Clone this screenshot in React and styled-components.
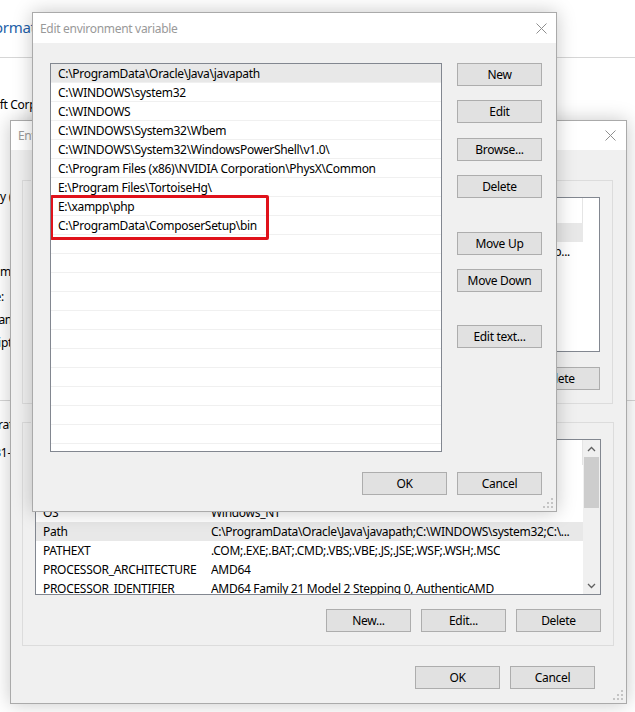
import React from "react"
import styled, { createGlobalStyle } from "styled-components"

const GlobalStyle = createGlobalStyle`
  html, body {
    margin: 0;
    padding: 0;
  }
  body {
    font-family: "Noto Sans", "Segoe UI", sans-serif;
    font-size: 12px;
    letter-spacing: -0.3px;
    color: #000;
  }
`

const Desktop = styled.div`
  position: relative;
  width: 635px;
  height: 712px;
  overflow: hidden;
  background: #fff;
`

/* the System page behind both dialogs */
const Backdrop = styled.div`
  display: flex;
  flex-direction: column;
  height: 100%;
`

const BgText = styled.div`
  display: flex;
  justify-content: flex-end;
  width: ${(p) => p.$end}px;
  margin-top: ${(p) => p.$gap}px;
  white-space: nowrap;
  font-size: ${(p) => (p.$big ? 15 : 12)}px;
  line-height: ${(p) => (p.$big ? 20 : 16)}px;
  color: ${(p) => (p.$big ? "#1e5fa8" : "#000")};
`

const BgRule = styled.div`
  height: 1px;
  margin-top: ${(p) => p.$gap}px;
  background: #d6d6d6;
`

/* dialog frames */
const Window = styled.div`
  position: absolute;
  left: ${(p) => p.$x}px;
  top: ${(p) => p.$y}px;
  width: ${(p) => p.$w}px;
  height: ${(p) => p.$h}px;
  box-sizing: border-box;
  display: flex;
  flex-direction: column;
  background: #f0f0f0;
  border: 1px solid #aaaaaa;
  box-shadow: 0 0 18px rgba(0, 0, 0, 0.22);
`

const TitleBar = styled.div`
  height: ${(p) => p.$h}px;
  flex: none;
  display: flex;
  align-items: center;
  justify-content: space-between;
  padding: 0 ${(p) => p.$pr}px 0 7px;
  background: #fff;
  color: #999;
  font-size: 12px;
`

const CloseIcon = () => (
  <svg width="11" height="11" viewBox="0 0 11 11">
    <path d="M0.5 0.5 L10.5 10.5 M10.5 0.5 L0.5 10.5" stroke="#8f8f8f" strokeWidth="1" fill="none" />
  </svg>
)

const Grip = styled.div`
  position: absolute;
  right: 2px;
  bottom: 2px;
  width: 12px;
  height: 12px;
  line-height: 0;
`

const GripIcon = () => (
  <svg width="12" height="12" viewBox="0 0 12 12">
    {[
      [9, 1],
      [9, 5],
      [5, 5],
      [9, 9],
      [5, 9],
      [1, 9],
    ].map(([x, y]) => (
      <rect key={x + "-" + y} x={x} y={y} width="2" height="2" fill="#c4c4c4" />
    ))}
  </svg>
)

const Button = styled.button`
  width: 85px;
  height: 23px;
  flex: none;
  box-sizing: border-box;
  margin: ${(p) => p.$gap || 0}px 0 0 0;
  padding: 0;
  background: #e1e1e1;
  border: 1px solid #adadad;
  font: inherit;
  font-size: 12px;
  letter-spacing: -0.3px;
  color: #000;
`

/* Edit environment variable */
const EditBody = styled.div`
  flex: 1;
  display: flex;
  flex-direction: column;
  padding: 20px 14px 16px 17px;
`

const EditMain = styled.div`
  display: flex;
  gap: 15px;
  height: 389px;
`

const PathList = styled.div`
  position: relative;
  width: 392px;
  box-sizing: border-box;
  border: 1px solid #828790;
  background: #fff;
  overflow: hidden;
`

const PathRow = styled.div`
  height: 19px;
  box-sizing: border-box;
  padding-left: 7px;
  border-bottom: 1px solid #f0f0f0;
  background: ${(p) => (p.$selected ? "#e8e8e8" : "#fff")};
  line-height: 19px;
  white-space: nowrap;
`

const Marker = styled.div`
  position: absolute;
  top: 131px;
  left: -1px;
  width: 219px;
  height: 45px;
  box-sizing: border-box;
  border: 3px solid #e0121b;
  border-radius: 2px;
`

const ButtonStack = styled.div`
  display: flex;
  flex-direction: column;
`

const Footer = styled.div`
  display: flex;
  justify-content: flex-end;
  gap: 10px;
  margin-top: ${(p) => p.$gap}px;
  margin-right: ${(p) => p.$right || 0}px;
`

/* Environment Variables */
const EnvBody = styled.div`
  flex: 1;
  display: flex;
  flex-direction: column;
  padding: 30px 13px 0 11px;
`

const Group = styled.fieldset`
  height: 224px;
  box-sizing: border-box;
  margin: ${(p) => p.$gap}px 0 0 0;
  padding: 16px 12px 0 12px;
  border: 1px solid #dcdcdc;
  display: flex;
  flex-direction: column;
`

const Legend = styled.legend`
  padding: 0 2px;
  margin-left: -4px;
  font-size: 12px;
  line-height: 0;
  height: 0;
`

const VarList = styled.div`
  position: relative;
  height: ${(p) => p.$h}px;
  box-sizing: border-box;
  border: 1px solid #828790;
  background: #fff;
  overflow: hidden;
  display: flex;
`

const VarTable = styled.div`
  flex: 1;
  display: flex;
  flex-direction: column;
`

const Cols = styled.div`
  display: grid;
  grid-template-columns: 168px 379px;
  height: ${(p) => (p.$head ? 25 : 19)}px;
  flex: none;
  background: ${(p) => (p.$selected ? "#e8e8e8" : "transparent")};
  width: 547px;
`

const Cell = styled.div`
  display: flex;
  padding: 0 ${(p) => (p.$tail ? 13 : 0)}px 0 7px;
  line-height: ${(p) => (p.$head ? 25 : 19)}px;
  white-space: nowrap;
  overflow: hidden;
  color: ${(p) => (p.$head ? "#4c607a" : "#000")};
  border-right: ${(p) => (p.$head ? "1px solid #e5e5e5" : "none")};
`

const Clip = styled.span`
  flex: 0 1 auto;
  min-width: 0;
  overflow: hidden;
`

const Tail = styled.span`
  flex: none;
`

const ScrollBar = styled.div`
  width: 17px;
  flex: none;
  display: flex;
  flex-direction: column;
  background: #f0f0f0;
`

const ScrollArrow = styled.div`
  height: 17px;
  display: flex;
  align-items: center;
  justify-content: center;
`

const ScrollTrack = styled.div`
  flex: 1;
  padding: 0 1px;
`

const Thumb = styled.div`
  height: 51px;
  background: #cdcdcd;
`

const Chevron = ({ down }) => (
  <svg width="9" height="6" viewBox="0 0 9 6">
    <polyline
      points={down ? "1,1 4.5,4.5 8,1" : "1,5 4.5,1.5 8,5"}
      stroke="#606060"
      strokeWidth="1.3"
      fill="none"
    />
  </svg>
)

const ButtonRow = styled.div`
  display: flex;
  justify-content: flex-end;
  gap: 10px;
  margin-top: ${(p) => p.$gap}px;
`

const paths = [
  "C:\\ProgramData\\Oracle\\Java\\javapath",
  "C:\\WINDOWS\\system32",
  "C:\\WINDOWS",
  "C:\\WINDOWS\\System32\\Wbem",
  "C:\\WINDOWS\\System32\\WindowsPowerShell\\v1.0\\",
  "C:\\Program Files (x86)\\NVIDIA Corporation\\PhysX\\Common",
  "E:\\Program Files\\TortoiseHg\\",
  "E:\\xampp\\php",
  "C:\\ProgramData\\ComposerSetup\\bin",
]

const userVars = [
  ["OneDrive", "C:\\Users\\User\\OneDrive"],
  ["Path", "C:\\Users\\User\\AppData\\Roaming\\Composer\\vendor\\bin;C:\\Users\\User\\AppData\\Local\\Microsoft\\WindowsA", "p..."],
  ["TEMP", "C:\\Users\\User\\AppData\\Local\\Temp"],
  ["TMP", "C:\\Users\\User\\AppData\\Local\\Temp"],
]

const systemVars = [
  ["ComSpec", "C:\\WINDOWS\\system32\\cmd.exe"],
  ["NUMBER_OF_PROCESSORS", "4"],
  ["OS", "Windows_NT"],
  ["Path", "C:\\ProgramData\\Oracle\\Java\\javapath;C:\\WINDOWS\\system32;C:\\..."],
  ["PATHEXT", ".COM;.EXE;.BAT;.CMD;.VBS;.VBE;.JS;.JSE;.WSF;.WSH;.MSC"],
  ["PROCESSOR_ARCHITECTURE", "AMD64"],
  ["PROCESSOR_IDENTIFIER", "AMD64 Family 21 Model 2 Stepping 0, AuthenticAMD"],
  ["PROCESSOR_LEVEL", "21"],
]

const VariableList = ({ rows, selected, height, scroll }) => (
  <VarList $h={height}>
    <VarTable>
      <Cols $head>
        <Cell $head>Variable</Cell>
        <Cell $head>Value</Cell>
      </Cols>
      {rows.map(([name, value, tail], i) => (
        <Cols key={name} $selected={i === selected}>
          <Cell>{name}</Cell>
          <Cell $tail={!!tail}>
            <Clip>{value}</Clip>
            {tail && <Tail>{tail}</Tail>}
          </Cell>
        </Cols>
      ))}
    </VarTable>
    {scroll && (
      <ScrollBar>
        <ScrollArrow>
          <Chevron />
        </ScrollArrow>
        <ScrollTrack>
          <Thumb />
        </ScrollTrack>
        <ScrollArrow>
          <Chevron down />
        </ScrollArrow>
      </ScrollBar>
    )}
  </VarList>
)

const App = () => {
  const blanks = Array.from({ length: 21 - paths.length })
  return (
    <Desktop>
      <GlobalStyle />

      <Backdrop>
        <BgText $big $gap={17} $end={57}>
          View basic information
        </BgText>
        <BgRule $gap={20} />
        <BgText $gap={39} $end={75}>
          © 2018 Microsoft Corporation
        </BgText>
        <BgText $gap={76} $end={12}>
          Installed memory (
        </BgText>
        <BgText $gap={59} $end={11}>
          Computer nam
        </BgText>
        <BgText $gap={9} $end={4}>
          Full computer name:
        </BgText>
        <BgText $gap={7} $end={12}>
          Computer domain and Main Lan
        </BgText>
        <BgText $gap={7} $end={12}>
          Computer descript
        </BgText>
        <BgRule $gap={49} />
        <BgText $gap={16} $end={13}>
          Windows is activated. Read the Microsoft Software License Terms. Administrat
        </BgText>
        <BgText $gap={12} $end={11}>
          Product ID: 00331-
        </BgText>
      </Backdrop>

      <Window $x={10} $y={120} $w={617} $h={584}>
        <TitleBar $h={29} $pr={10}>
          <span>Environment Variables</span>
          <CloseIcon />
        </TitleBar>
        <EnvBody>
          <Group $gap={0}>
            <Legend>User variables for User</Legend>
            <VariableList rows={userVars} selected={0} height={155} />
            <ButtonRow $gap={15}>
              <Button>New...</Button>
              <Button>Edit...</Button>
              <Button>Delete</Button>
            </ButtonRow>
          </Group>
          <Group $gap={18}>
            <Legend>System variables</Legend>
            <VariableList rows={systemVars} selected={3} height={156} scroll />
            <ButtonRow $gap={14}>
              <Button>New...</Button>
              <Button>Edit...</Button>
              <Button>Delete</Button>
            </ButtonRow>
          </Group>
          <Footer $gap={20} $right={18}>
            <Button>OK</Button>
            <Button>Cancel</Button>
          </Footer>
        </EnvBody>
        <Grip>
          <GripIcon />
        </Grip>
      </Window>

      <Window $x={32} $y={12} $w={525} $h={500}>
        <TitleBar $h={30} $pr={9}>
          <span>Edit environment variable</span>
          <CloseIcon />
        </TitleBar>
        <EditBody>
          <EditMain>
            <PathList>
              {paths.map((p, i) => (
                <PathRow key={p} $selected={i === 0}>
                  {p}
                </PathRow>
              ))}
              {blanks.map((_, i) => (
                <PathRow key={"blank" + i} />
              ))}
              <Marker />
            </PathList>
            <ButtonStack>
              <Button>New</Button>
              <Button $gap={14}>Edit</Button>
              <Button $gap={15}>Browse...</Button>
              <Button $gap={14}>Delete</Button>
              <Button $gap={34}>Move Up</Button>
              <Button $gap={14}>Move Down</Button>
              <Button $gap={33}>Edit text...</Button>
            </ButtonStack>
          </EditMain>
          <Footer $gap={20}>
            <Button>OK</Button>
            <Button>Cancel</Button>
          </Footer>
        </EditBody>
        <Grip>
          <GripIcon />
        </Grip>
      </Window>
    </Desktop>
  )
}

export default App
